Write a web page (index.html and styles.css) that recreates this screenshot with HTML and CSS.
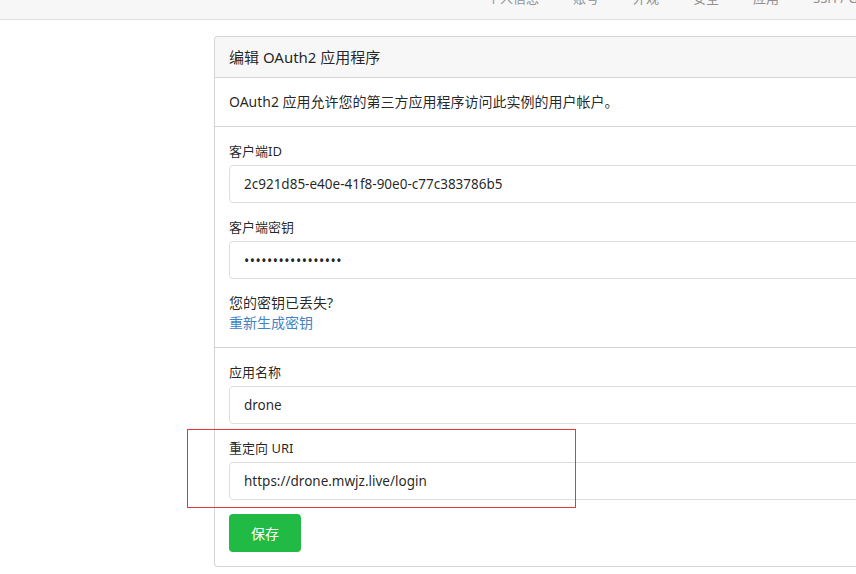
FILE: index.html
```html
<!DOCTYPE html>
<html lang="zh-CN">

<head>
  <meta charset="UTF-8" />
  <meta name="viewport" content="width=device-width, initial-scale=1.0" />
  <title>编辑 OAuth2 应用程序</title>
  <link rel="stylesheet" href="styles.css">
</head>

<body>
  <div class="topbar">
    <div class="menu">
      <a class="item">个人信息</a>
      <a class="item">账号</a>
      <a class="item">外观</a>
      <a class="item">安全</a>
      <a class="item">应用</a>
      <a class="item">SSH / GPG 密钥</a>
    </div>
  </div>

  <div class="page">
    <div class="side"></div>
    <div class="main">
      <h4 class="header">编辑 OAuth2 应用程序</h4>
      <div class="segment">
        <p>OAuth2 应用允许您的第三方应用程序访问此实例的用户帐户。</p>
      </div>

      <div class="segment form">
        <div class="field">
          <label>客户端ID</label>
          <input type="text" value="2c921d85-e40e-41f8-90e0-c77c383786b5" readonly>
        </div>
        <div class="field">
          <label>客户端密钥</label>
          <input type="password" value="xxxxxxxxxxxxxxxxx" readonly>
        </div>
        <div class="hint">
          <div>您的密钥已丢失?</div>
          <a href="#">重新生成密钥</a>
        </div>
      </div>

      <form class="segment form">
        <div class="field">
          <label>应用名称</label>
          <input type="text" value="drone">
        </div>
        <div class="field">
          <label>重定向 URI</label>
          <input type="text" value="https://drone.mwjz.live/login">
        </div>
        <button type="button" class="btn-green">保存</button>
      </form>
    </div>
  </div>

  <div class="mark"></div>
</body>

</html>
```

FILE: styles.css
```css
:root {
  --text: rgba(0, 0, 0, 0.87);
  --border: #d4d4d5;
  --input-border: #dedede;
  --header-bg: #f7f7f7;
  --link: #4183c4;
  --green: #21ba45;
  --mark: #e0383e;
}

html,
body {
  margin: 0;
  height: 100%;
  overflow: hidden;
}

body {
  font-family: 'Segoe UI', 'Noto Sans', 'Noto Sans CJK SC', sans-serif;
  font-size: 14px;
  color: var(--text);
  background: #fff;
  position: relative;
}

.topbar {
  height: 19px;
  background: var(--header-bg);
  border-bottom: 1px solid var(--input-border);
  overflow: hidden;
}

.menu {
  display: flex;
  padding-left: 470px;
  margin-top: -12px;
  white-space: nowrap;
}

.menu .item {
  padding: 0 17px;
  font-size: 13px;
  line-height: 20px;
  color: #909090;
}

.page {
  display: flex;
  padding-top: 16px;
}

.side {
  flex: 0 0 214px;
}

.main {
  flex: 0 0 720px;
  border: 1px solid var(--border);
  border-right: none;
  border-radius: 4px 0 0 4px;
}

.header {
  margin: 0;
  padding: 10px 14px;
  font-size: 15px;
  font-weight: normal;
  line-height: 20px;
  background: var(--header-bg);
  border-bottom: 1px solid var(--border);
  border-radius: 4px 0 0 0;
}

.segment {
  margin: 0;
  padding: 14px;
  border-bottom: 1px solid var(--border);
}

.segment:last-child {
  border-bottom: none;
}

.segment p {
  margin: 0;
  line-height: 20px;
}

.field {
  margin-bottom: 14px;
}

.field label {
  display: block;
  margin-bottom: 4px;
  font-size: 13px;
  line-height: 20px;
}

.field input {
  display: block;
  box-sizing: border-box;
  width: 100%;
  height: 38px;
  padding: 0 14px;
  font-family: inherit;
  font-size: 13.5px;
  color: var(--text);
  border: 1px solid var(--input-border);
  border-radius: 4px;
  outline: none;
}

.field input[type="password"] {
  font-size: 14px;
  letter-spacing: 0.5px;
}

.hint {
  line-height: 20px;
}

.hint a {
  color: var(--link);
  text-decoration: none;
}

.btn-green {
  height: 38px;
  padding: 0 22px;
  font-family: inherit;
  font-size: 14px;
  color: #fff;
  background: var(--green);
  border: none;
  border-radius: 4px;
  cursor: pointer;
}

/* annotation box drawn over the redirect field */
.mark {
  position: absolute;
  left: 187px;
  top: 429px;
  width: 387px;
  height: 77px;
  border: 1px solid var(--mark);
}
```
